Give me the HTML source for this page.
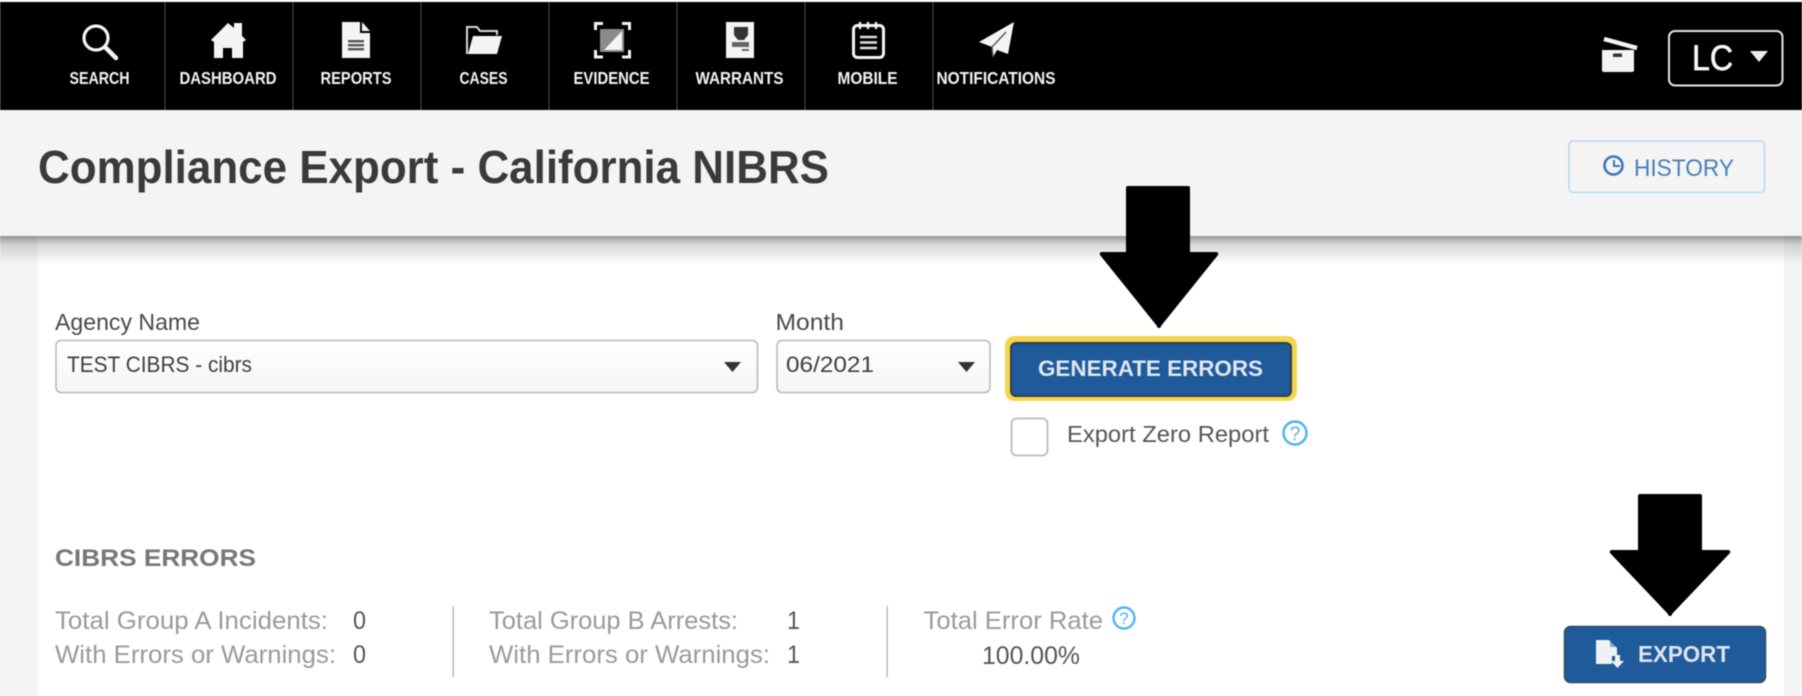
<!DOCTYPE html>
<html lang="en"><head><meta charset="utf-8"><title>Compliance Export - California NIBRS</title>
<style>
html,body{margin:0;padding:0;width:1802px;height:696px;overflow:hidden;background:#fff}
svg{display:block;filter:blur(.55px)}
text{font-family:"Liberation Sans",Arial,sans-serif}
.n{font-size:17.5px;font-weight:700;fill:#f2f2f2}
.g{font-size:25px;fill:#9a9a9a}
.v{font-size:25px;fill:#555}
.d{font-size:23px;fill:#4a4a4a}
</style></head><body>
<svg width="1802" height="696" viewBox="0 0 1802 696" xmlns="http://www.w3.org/2000/svg">
<defs>
<linearGradient id="sh" x1="0" y1="0" x2="0" y2="1"><stop offset="0" stop-color="#000" stop-opacity=".4"/><stop offset=".3" stop-color="#000" stop-opacity=".15"/><stop offset="1" stop-color="#000" stop-opacity="0"/></linearGradient>
<linearGradient id="sel" x1="0" y1="0" x2="0" y2="1"><stop offset="0" stop-color="#fff"/><stop offset="1" stop-color="#f5f5f5"/></linearGradient>
</defs>
<rect width="1802" height="696" fill="#f4f4f4"/>
<rect x="38" y="236" width="1746" height="460" fill="#fff"/>
<rect x="0" y="236" width="1802" height="28" fill="url(#sh)"/>
<rect x="0" y="110" width="1802" height="126" fill="#f4f4f4"/>
<rect x="0" y="0" width="1802" height="2" fill="#fff"/>
<rect x="0" y="2" width="1802" height="108" fill="#000"/>
<g fill="#3a3a3a"><rect x="164.300" y="2" width="1.400" height="108"/><rect x="292.300" y="2" width="1.400" height="108"/><rect x="420.300" y="2" width="1.400" height="108"/><rect x="548.300" y="2" width="1.400" height="108"/><rect x="676.300" y="2" width="1.400" height="108"/><rect x="804.300" y="2" width="1.400" height="108"/><rect x="932.300" y="2" width="1.400" height="108"/></g>

<!-- nav icons -->
<circle cx="96" cy="38" r="12" fill="none" stroke="#f4f4f4" stroke-width="3.200"/>
<path d="M105 47L116 58" stroke="#f4f4f4" stroke-width="4.500" stroke-linecap="round"/>
<path d="M211 40L228 23L234 28V23H242V36L246 40L243 42V58H232V48H223V58H214V42Z" fill="#f4f4f4"/>
<path d="M342 22H360V33H370V58H342Z" fill="#f4f4f4"/><path d="M362 22L370 31H362Z" fill="#f4f4f4"/>
<g fill="#555"><rect x="348" y="40" width="16" height="2.400"/><rect x="348" y="44" width="16" height="2.400"/><rect x="348" y="48" width="16" height="2.400"/></g>
<path d="M467 54V27H477L480 31H497V35" fill="none" stroke="#d8d8d8" stroke-width="2"/>
<path d="M473 36H502L497 54H468Z" fill="#f4f4f4"/>
<path d="M595.500 30V23.500H603M622 23.500H629.500V30M595.500 50V57H603M622 57H629.500V50" fill="none" stroke="#f4f4f4" stroke-width="3"/>
<rect x="600" y="29" width="24" height="23" fill="#8a8a8a"/>
<path d="M622 31V50H604Z" fill="#f4f4f4"/>
<rect x="726" y="22" width="28" height="36" fill="#f4f4f4"/>
<path d="M734 27H748V35L744 40H738L734 35Z" fill="#333"/>
<rect x="732" y="42" width="17" height="5" fill="#666"/><rect x="742" y="49" width="7" height="2" fill="#666"/>
<rect x="853.500" y="25.500" width="30" height="32" rx="4" fill="none" stroke="#f4f4f4" stroke-width="3"/>
<path d="M860 22V29M868 22V29M876 22V29" stroke="#f4f4f4" stroke-width="2.400"/>
<path d="M860 37H877M860 42.500H877M860 48H877" stroke="#ddd" stroke-width="2.400"/>
<path d="M1014 22L979 42L992 47L993 57L997 50L1008 54Z" fill="#f4f4f4"/>
<path d="M1006 32L992 47L993 57" fill="none" stroke="#555" stroke-width="1.400"/>

<!-- nav labels -->
<text class="n" x="69.500" y="84" textLength="60" lengthAdjust="spacingAndGlyphs">SEARCH</text>
<text class="n" x="179.500" y="84" textLength="97" lengthAdjust="spacingAndGlyphs">DASHBOARD</text>
<text class="n" x="320.500" y="84" textLength="71" lengthAdjust="spacingAndGlyphs">REPORTS</text>
<text class="n" x="459.500" y="84" textLength="48" lengthAdjust="spacingAndGlyphs">CASES</text>
<text class="n" x="573.500" y="84" textLength="76" lengthAdjust="spacingAndGlyphs">EVIDENCE</text>
<text class="n" x="695.500" y="84" textLength="88" lengthAdjust="spacingAndGlyphs">WARRANTS</text>
<text class="n" x="837.500" y="84" textLength="60" lengthAdjust="spacingAndGlyphs">MOBILE</text>
<text class="n" x="936.500" y="84" textLength="119" lengthAdjust="spacingAndGlyphs">NOTIFICATIONS</text>

<!-- right nav -->
<path d="M1604 39L1637 48" stroke="#f4f4f4" stroke-width="4.500"/>
<path d="M1602 50H1634V70a2 2 0 0 1-2 2H1604a2 2 0 0 1-2-2Z" fill="#f4f4f4"/>
<rect x="1613" y="53.500" width="9" height="3.500" fill="#333"/>
<rect x="1669" y="31" width="113.500" height="54.500" rx="6" fill="#000" stroke="#e4e4e4" stroke-width="2"/>
<text x="1692" y="70" font-size="35" fill="#f6f6f6" stroke="#f6f6f6" stroke-width=".7" textLength="41" lengthAdjust="spacingAndGlyphs">LC</text>
<path d="M1750 51H1768L1759 62Z" fill="#eee"/>

<!-- title -->
<text x="38" y="183" font-size="46" font-weight="700" fill="#3a3a3a" textLength="791" lengthAdjust="spacingAndGlyphs">Compliance Export - California NIBRS</text>
<rect x="1569" y="141" width="195.500" height="51.500" rx="4" fill="#f4f4f4" stroke="#bcd8ee" stroke-width="1.600"/>
<circle cx="1613.500" cy="165.500" r="9" fill="none" stroke="#3b78b6" stroke-width="2.600"/>
<path d="M1614 160V166H1620" fill="none" stroke="#3b78b6" stroke-width="2"/>
<text x="1634" y="176" font-size="24" fill="#4a80b8" textLength="100" lengthAdjust="spacingAndGlyphs">HISTORY</text>

<!-- form -->
<text class="d" x="55" y="330" textLength="145" lengthAdjust="spacingAndGlyphs">Agency Name</text>
<text class="d" x="775.500" y="330" textLength="68.500" lengthAdjust="spacingAndGlyphs">Month</text>
<rect x="56" y="340.500" width="701.500" height="52" rx="5" fill="url(#sel)" stroke="#b8b8b8" stroke-width="1.500"/>
<rect x="777" y="340.500" width="213" height="52" rx="5" fill="url(#sel)" stroke="#b8b8b8" stroke-width="1.500"/>
<text x="67" y="372" font-size="22" fill="#3f3f3f" textLength="185" lengthAdjust="spacingAndGlyphs">TEST CIBRS - cibrs</text>
<text x="786" y="372" font-size="22" fill="#3f3f3f" textLength="88" lengthAdjust="spacingAndGlyphs">06/2021</text>
<path d="M724 362H741L732.500 372Z" fill="#333"/>
<path d="M958 362H975L966.500 372Z" fill="#333"/>

<!-- generate -->
<rect x="1006.500" y="337.500" width="289" height="62" rx="8" fill="#f4d64e" stroke="#f4d64e" stroke-width="3"/>
<rect x="1011" y="343" width="280" height="53" rx="5" fill="#1f5a9a" stroke="#2f3f50" stroke-width="2"/>
<text x="1038" y="376" font-size="22" font-weight="700" fill="#dfe6ee" textLength="225" lengthAdjust="spacingAndGlyphs">GENERATE ERRORS</text>
<rect x="1011.500" y="418.500" width="36" height="37" rx="5" fill="#fff" stroke="#bbb" stroke-width="1.800"/>
<text x="1067" y="442" font-size="23" fill="#555" textLength="202" lengthAdjust="spacingAndGlyphs">Export Zero Report</text>
<circle cx="1295" cy="433" r="11.500" fill="#fff" stroke="#4db4f5" stroke-width="2.400"/>
<text x="1295" y="440" font-size="19" fill="#4db4f5" text-anchor="middle">?</text>

<!-- arrows -->
<path d="M1126 188a2 2 0 0 1 2-2H1188a2 2 0 0 1 2 2V252H1216a2 2 0 0 1 2 3L1161 326a2 2 0 0 1-4 0L1100 255a2 2 0 0 1 2-3H1126Z" fill="#000"/>
<path d="M1638 496a2 2 0 0 1 2-2H1700a2 2 0 0 1 2 2V550H1728a2 2 0 0 1 2 3L1672 614a2 2 0 0 1-4 0L1610 553a2 2 0 0 1 2-3H1638Z" fill="#000"/>

<!-- stats -->
<text x="55" y="566" font-size="24" font-weight="700" fill="#777" textLength="201" lengthAdjust="spacingAndGlyphs">CIBRS ERRORS</text>
<text class="g" x="55" y="629" textLength="273" lengthAdjust="spacingAndGlyphs">Total Group A Incidents:</text>
<text class="g" x="55" y="663" textLength="281" lengthAdjust="spacingAndGlyphs">With Errors or Warnings:</text>
<text class="v" x="353" y="629" textLength="13" lengthAdjust="spacingAndGlyphs">0</text>
<text class="v" x="353" y="663" textLength="13" lengthAdjust="spacingAndGlyphs">0</text>
<rect x="452.500" y="606" width="1.300" height="71" fill="#b0b0b0"/>
<text class="g" x="489" y="629" textLength="249" lengthAdjust="spacingAndGlyphs">Total Group B Arrests:</text>
<text class="g" x="489" y="663" textLength="281" lengthAdjust="spacingAndGlyphs">With Errors or Warnings:</text>
<text class="v" x="787" y="629" textLength="13" lengthAdjust="spacingAndGlyphs">1</text>
<text class="v" x="787" y="663" textLength="13" lengthAdjust="spacingAndGlyphs">1</text>
<rect x="886.500" y="606" width="1.300" height="71" fill="#b0b0b0"/>
<text class="g" x="923.500" y="629" textLength="179.500" lengthAdjust="spacingAndGlyphs">Total Error Rate</text>
<circle cx="1124" cy="618" r="10.500" fill="#fff" stroke="#4db4f5" stroke-width="2.400"/>
<text x="1124" y="624" font-size="17" fill="#4db4f5" text-anchor="middle">?</text>
<text class="v" x="982" y="664" textLength="98" lengthAdjust="spacingAndGlyphs">100.00%</text>

<!-- export -->
<rect x="1564.500" y="626.500" width="201" height="56" rx="6" fill="#1f5a9a" stroke="#3a4a5a" stroke-width="1.500"/>
<path d="M1596 640H1609L1617 648V656H1612V664H1596Z" fill="#eef1f4"/>
<path d="M1610 640L1617 647H1610Z" fill="#1f5a9a" opacity=".5"/>
<path d="M1615 655H1620V661H1624L1617.500 668L1611 661H1615Z" fill="#eef1f4"/>
<text x="1638" y="662" font-size="23" font-weight="700" fill="#dde4ec" textLength="92" lengthAdjust="spacingAndGlyphs">EXPORT</text>
</svg>
</body></html>
